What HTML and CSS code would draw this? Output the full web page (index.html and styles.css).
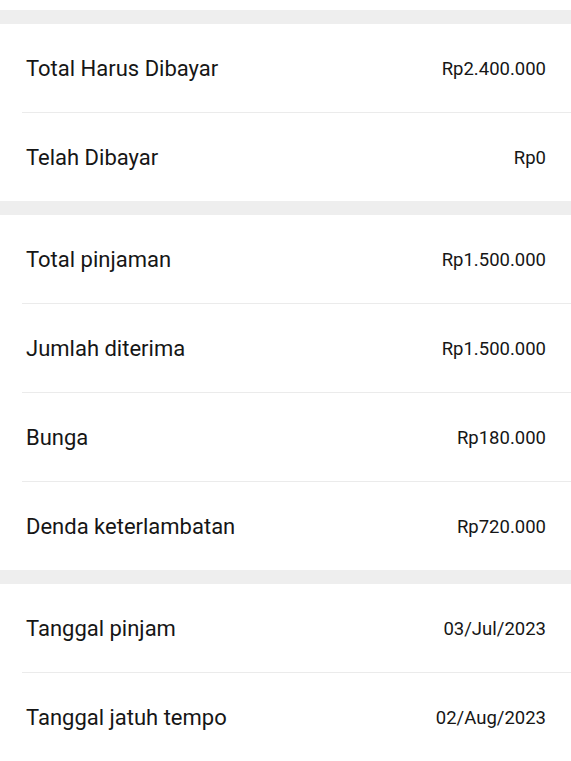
FILE: index.html
```html
<!DOCTYPE html>
<html>
<head>
<meta charset="utf-8">
<link rel="stylesheet" href="styles.css">
</head>
<body>
<div class="page">
  <div class="gap"></div>
  <section class="group">
    <div class="row"><span class="label">Total Harus Dibayar</span><span class="value">Rp2.400.000</span></div>
    <div class="row"><span class="label">Telah Dibayar</span><span class="value">Rp0</span></div>
  </section>
  <div class="gap"></div>
  <section class="group">
    <div class="row"><span class="label">Total pinjaman</span><span class="value">Rp1.500.000</span></div>
    <div class="row"><span class="label">Jumlah diterima</span><span class="value">Rp1.500.000</span></div>
    <div class="row"><span class="label">Bunga</span><span class="value">Rp180.000</span></div>
    <div class="row"><span class="label">Denda keterlambatan</span><span class="value">Rp720.000</span></div>
  </section>
  <div class="gap"></div>
  <section class="group">
    <div class="row"><span class="label">Tanggal pinjam</span><span class="value">03/Jul/2023</span></div>
    <div class="row"><span class="label">Tanggal jatuh tempo</span><span class="value">02/Aug/2023</span></div>
  </section>
</div>
</body>
</html>
```

FILE: styles.css
```css
html, body {
  margin: 0;
  padding: 0;
  background: #ffffff;
}
body {
  font-family: Roboto, "Liberation Sans", Arial, sans-serif;
  color: #161616;
}
.page {
  padding-top: 10px;
  display: flex;
  flex-direction: column;
}
.gap {
  height: 14px;
  background: #eeeeee;
}
.group {
  background: #ffffff;
  display: flex;
  flex-direction: column;
}
.row {
  height: 88px;
  display: flex;
  align-items: center;
  justify-content: space-between;
  padding: 0 25px 0 26px;
}
.row + .row {
  border-top: 1px solid #ebebeb;
  margin-left: 22px;
  padding-left: 4px;
}
.label {
  font-size: 22px;
}
.value {
  font-size: 18.5px;
  padding-top: 1px;
}
```
